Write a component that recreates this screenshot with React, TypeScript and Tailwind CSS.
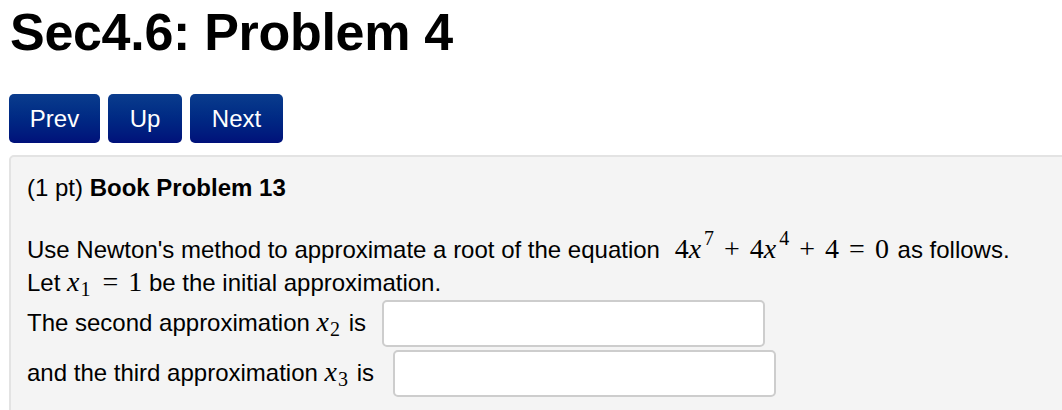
import React from "react";

const mathFont = { fontFamily: '"Liberation Serif", "DejaVu Serif", serif' };

function X({ sub, sup }: { sub?: string; sup?: string }) {
  return (
    <span>
      <i className="pr-[1px]">x</i>
      {sub && <span className="text-[20px] relative top-[5px] pr-[2px]">{sub}</span>}
      {sup && <span className="text-[20px] relative top-[-13px] pl-[2px]">{sup}</span>}
    </span>
  );
}

function M({ children, className = "" }: { children: React.ReactNode; className?: string }) {
  return (
    <span className={"text-[28px] leading-[33px] " + className} style={mathFont}>
      {children}
    </span>
  );
}

function Op({ c, w }: { c: string; w: string }) {
  return <span className={w}>{c}</span>;
}

export default function App() {
  return (
    <div className="w-[1062px] h-[410px] overflow-hidden bg-white text-black font-['Liberation_Sans',Arial,sans-serif]">
      <div className="pl-[9px] pt-[2px]">
        <h1 className="text-[52px] font-bold leading-[60px] tracking-[-0.3px] m-0 pl-[1px]">Sec4.6: Problem 4</h1>
        <div className="flex gap-[8px] mt-[32px]">
          <button className="w-[91px] h-[49px] rounded-[5px] bg-gradient-to-b from-[#0b3c8d] to-[#00107a] text-white text-[24px]">Prev</button>
          <button className="w-[74px] h-[49px] rounded-[5px] bg-gradient-to-b from-[#0b3c8d] to-[#00107a] text-white text-[24px]">Up</button>
          <button className="w-[93px] h-[49px] rounded-[5px] bg-gradient-to-b from-[#0b3c8d] to-[#00107a] text-white text-[24px]">Next</button>
        </div>
        <div className="mt-[12px] w-[1100px] h-[300px] bg-[#f4f4f4] border-2 border-[#e3e3e3] rounded-[5px] pl-[16px] pt-[14px] text-[24px] leading-[33px]">
          <div className="h-[33px]">(1 pt) <b>Book Problem 13</b></div>
          <div className="mt-[28px] h-[33px] whitespace-nowrap">
            Use Newton's method to approximate a root of the equation{" "}
            <M className="ml-[8px] mr-[2px]">
              4<X sup="7" />
              <Op c="+" w="px-[10px]" />4<X sup="4" />
              <Op c="+" w="px-[10px]" />4<Op c="=" w="px-[10px]" />0
            </M>{" "}
            as follows.
          </div>
          <div className="h-[33px] whitespace-nowrap">
            Let{" "}
            <M>
              <X sub="1" />
              <Op c="=" w="px-[10px]" />1
            </M>{" "}
            be the initial approximation.
          </div>
          <div className="flex items-center h-[50px] whitespace-nowrap">
            <span className="leading-[33px]">
              The second approximation{" "}
              <M>
                <X sub="2" />
              </M>{" "}
              is
            </span>
            <input className="ml-[16px] w-[383px] h-[47px] bg-white border-2 border-[#cdcdcd] rounded-[5px]" />
          </div>
          <div className="flex items-center h-[50px] whitespace-nowrap">
            <span className="leading-[33px]">
              and the third approximation{" "}
              <M>
                <X sub="3" />
              </M>{" "}
              is
            </span>
            <input className="ml-[19px] w-[383px] h-[47px] bg-white border-2 border-[#cdcdcd] rounded-[5px]" />
          </div>
        </div>
      </div>
    </div>
  );
}
